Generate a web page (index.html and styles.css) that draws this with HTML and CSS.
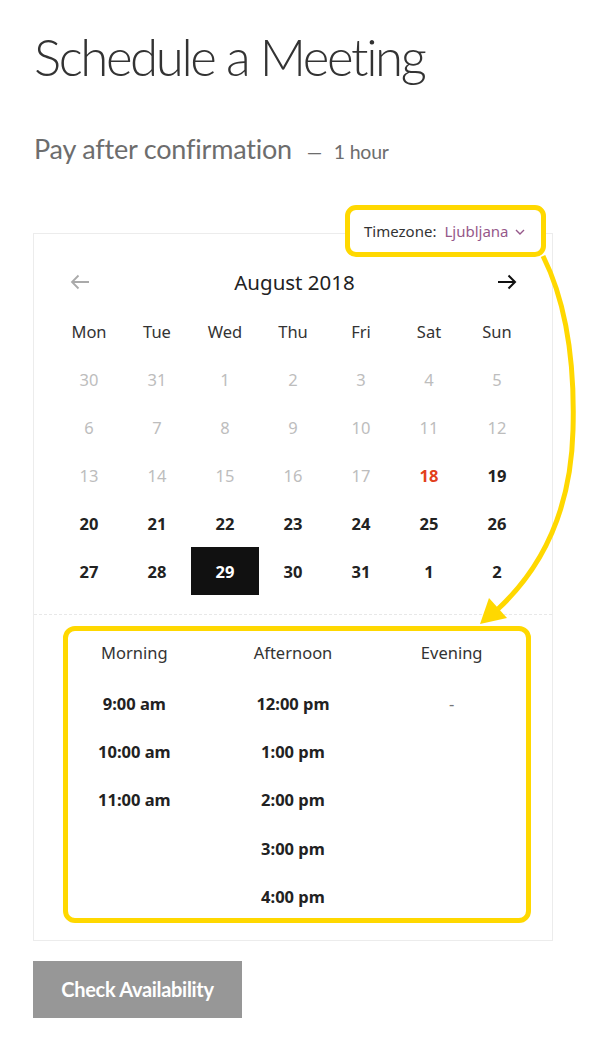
FILE: index.html
```html
<!DOCTYPE html>
<html lang="en">
<head>
<meta charset="utf-8">
<title>Schedule a Meeting</title>
<link rel="stylesheet" href="styles.css">
</head>
<body>
<div class="page">
  <h1 class="title">Schedule a Meeting</h1>
  <p class="subtitle">Pay after confirmation <span class="duration"><span class="dash">—</span> 1 hour</span></p>

  <div class="booking">
    <div class="timezone">
      <span class="tz-label">Timezone:</span>
      <span class="tz-value">Ljubljana</span>
      <svg class="tz-chevron" width="10" height="6" viewBox="0 0 10 6"><path d="M1 1l4 4 4-4" fill="none" stroke="#96588a" stroke-width="1.4"/></svg>
    </div>

    <div class="calendar">
      <div class="cal-nav">
        <svg class="nav-arrow" width="20" height="16" viewBox="0 0 20 16"><path d="M19 8H2M8.5 1.5L2 8l6.5 6.5" fill="none" stroke="#aaaaaa" stroke-width="1.8"/></svg>
        <span class="cal-month">August 2018</span>
        <svg class="nav-arrow" width="20" height="16" viewBox="0 0 20 16"><path d="M1 8h17M11.5 1.5L18 8l-6.5 6.5" fill="none" stroke="#111111" stroke-width="2"/></svg>
      </div>
      <div class="cal-grid">
        <div class="wd">Mon</div><div class="wd">Tue</div><div class="wd">Wed</div><div class="wd">Thu</div><div class="wd">Fri</div><div class="wd">Sat</div><div class="wd">Sun</div>
        <div class="day off">30</div><div class="day off">31</div><div class="day off">1</div><div class="day off">2</div><div class="day off">3</div><div class="day off">4</div><div class="day off">5</div>
        <div class="day off">6</div><div class="day off">7</div><div class="day off">8</div><div class="day off">9</div><div class="day off">10</div><div class="day off">11</div><div class="day off">12</div>
        <div class="day off">13</div><div class="day off">14</div><div class="day off">15</div><div class="day off">16</div><div class="day off">17</div><div class="day today">18</div><div class="day">19</div>
        <div class="day">20</div><div class="day">21</div><div class="day">22</div><div class="day">23</div><div class="day">24</div><div class="day">25</div><div class="day">26</div>
        <div class="day">27</div><div class="day">28</div><div class="day selected">29</div><div class="day">30</div><div class="day">31</div><div class="day">1</div><div class="day">2</div>
      </div>
    </div>

    <div class="slots">
      <div class="slots-highlight"></div>
      <div class="slot-col">
        <div class="slot-head">Morning</div>
        <div class="slot">9:00 am</div>
        <div class="slot">10:00 am</div>
        <div class="slot">11:00 am</div>
      </div>
      <div class="slot-col">
        <div class="slot-head">Afternoon</div>
        <div class="slot">12:00 pm</div>
        <div class="slot">1:00 pm</div>
        <div class="slot">2:00 pm</div>
        <div class="slot">3:00 pm</div>
        <div class="slot">4:00 pm</div>
      </div>
      <div class="slot-col">
        <div class="slot-head">Evening</div>
        <div class="slot empty">-</div>
      </div>
    </div>
  </div>

  <button class="check-btn" type="button">Check Availability</button>

  <svg class="annot-arrow" width="590" height="1042" viewBox="0 0 590 1042">
    <path d="M543 256 C 565 300, 575 360, 573 430 C 571 510, 542 568, 498 609" fill="none" stroke="#ffd800" stroke-width="5"/>
    <polygon points="480,624 489,598 507,618" fill="#ffd800"/>
  </svg>
</div>
</body>
</html>
```

FILE: styles.css
```css
* { box-sizing: border-box; }
html, body { margin: 0; padding: 0; background: #ffffff; }
.page {
  position: relative;
  width: 590px;
  height: 1042px;
  padding: 24px 37px 0 33px;
  font-family: "Lato", "Open Sans", sans-serif;
  color: #333333;
}
.title {
  margin: 0 0 0 1px;
  font-family: "Lato", sans-serif;
  font-weight: 300;
  font-size: 51px;
  line-height: 66px;
  letter-spacing: -2.4px;
  color: #333333;
}
.subtitle {
  margin: 42px 0 0 1px;
  font-family: "Lato", sans-serif;
  font-weight: 400;
  font-size: 27px;
  line-height: 34px;
  color: #6d6d6d;
  letter-spacing: -0.2px;
}
.duration { font-size: 19.5px; margin-left: 8px; }
.dash { margin-right: 7px; }

.booking {
  position: relative;
  margin-top: 64px;
  border: 1px solid #ececec;
  font-family: "Noto Sans", "Open Sans", sans-serif;
}
.timezone {
  position: absolute;
  top: -29px;
  right: 6px;
  width: 201px;
  height: 52px;
  display: flex;
  align-items: center;
  padding-left: 14px;
  border: 5px solid #ffd800;
  border-radius: 11px;
  background: #ffffff;
  font-size: 15px;
}
.tz-label { color: #333333; margin-right: 8px; }
.tz-value { color: #96588a; margin-right: 6px; }
.tz-chevron { margin-top: 2px; }

.calendar { padding: 23px 21px 19px 21px; }
.cal-nav {
  height: 50px;
  display: flex;
  align-items: center;
  justify-content: space-between;
  padding: 0 14px 0 15px;
}
.cal-month { font-size: 20.5px; color: #222222; margin-left: 2px; }
.cal-grid {
  display: grid;
  grid-template-columns: repeat(7, 68px);
  grid-auto-rows: 48px;
}
.wd, .day {
  display: flex;
  align-items: center;
  justify-content: center;
  font-size: 16.5px;
}
.wd { color: #333333; }
.day { font-weight: 700; color: #222222; }
.day.off { font-weight: 400; color: #bdbdbd; }
.day.today { color: #e2401c; }
.day.selected { background: #111111; color: #ffffff; }

.slots {
  position: relative;
  display: grid;
  grid-template-columns: repeat(3, 1fr);
  padding: 13px 21px 19px 21px;
  border-top: 1px dashed #e8e8e8;
}
.slots-highlight {
  position: absolute;
  left: 29px;
  right: 21px;
  top: 11px;
  bottom: 17px;
  border: 5px solid #ffd800;
  border-radius: 12px;
  pointer-events: none;
}
.slot-col { display: flex; flex-direction: column; align-items: center; }
.slot-head {
  height: 48px;
  margin-bottom: 3px;
  display: flex;
  align-items: center;
  font-size: 16.5px;
  color: #333333;
}
.slot {
  height: 48.4px;
  display: flex;
  align-items: center;
  font-size: 16.5px;
  font-weight: 700;
  color: #222222;
}
.slot.empty { font-weight: 400; color: #777777; }

.check-btn {
  display: block;
  margin-top: 20px;
  width: 209px;
  height: 57px;
  border: 0;
  background: #979797;
  color: #ffffff;
  font-family: "Lato", sans-serif;
  font-weight: 700;
  font-size: 20px;
  letter-spacing: -0.3px;
  padding: 0;
}
.annot-arrow {
  position: absolute;
  left: 0;
  top: 0;
  pointer-events: none;
}
```
